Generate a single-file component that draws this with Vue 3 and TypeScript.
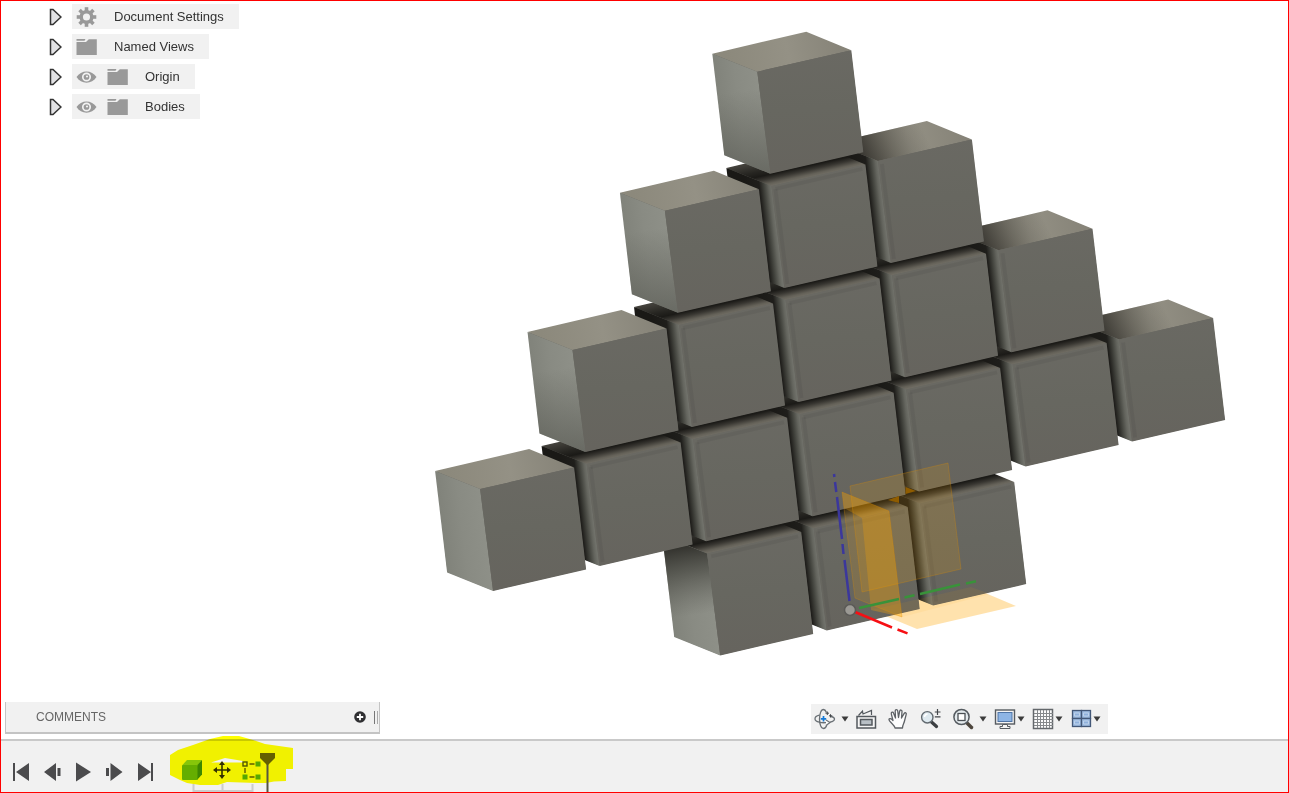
<script setup lang="ts">
interface TreeItem {
  label: string
  icons: string[]
}

interface Cube {
  key: string
  x: number
  y: number
  topOpen: boolean
  leftOpen: boolean
}

interface NavTool {
  id: string
  label: string
  size: string
}

const treeItems: TreeItem[] = [
  { label: 'Document Settings', icons: ['gear'] },
  { label: 'Named Views', icons: ['folder'] },
  { label: 'Origin', icons: ['eye', 'folder'] },
  { label: 'Bodies', icons: ['eye', 'folder'] },
]

const gearTeeth = [0, 45, 90, 135, 180, 225, 270, 315]

// First and last column of each row, from the top row down
const rows: [number, number][] = [[0, 0], [-1, 1], [-2, 2], [-3, 3], [-1, 1]]

const filled = (c: number, r: number): boolean =>
  r >= 0 && r < rows.length && c >= rows[r][0] && c <= rows[r][1]

// Painter's order: bottom row first, right to left
const cubes: Cube[] = []
for (let r = rows.length - 1; r >= 0; r--) {
  for (let c = rows[r][1]; c >= rows[r][0]; c--) {
    cubes.push({
      key: `${c}:${r}`,
      x: 757.3 + 106.5 * c + 14.1 * r,
      y: 71.7 - 24.9 * c + 114.2 * r,
      topOpen: !filled(c, r - 1),
      leftOpen: !filled(c - 1, r),
    })
  }
}

const hull = '-44,-17.5 49,-39 93.500,-21 105.500,80 13,101.500 -32.500,83'
const topFace = '0,0 -45,-18 49,-40 94,-21.5'
const leftFace = '0,0 -45,-18 -33,83.5 13,102'
const frontFace = '0,0 94,-21.5 106,80.5 13,102'

const playback = [
  { label: 'Go to start', path: 'M7 2h2v18H7zM23 2v18L10 11z' },
  { label: 'Step back', path: 'M19 2v18L7 11zM20.5 7h3v8h-3z' },
  { label: 'Play', path: 'M8 1.5v19L23 11z' },
  { label: 'Step forward', path: 'M7 7h3v8H7zM11.5 2v18L23.5 11z' },
  { label: 'Go to end', path: 'M8 2v18L21 11zM21 2h2v18h-2z' },
]

const navTools: NavTool[] = [
  { id: 'orbit', label: 'Orbit', size: 'wide' },
  { id: 'look', label: 'Look at', size: 'plain' },
  { id: 'pan', label: 'Pan', size: 'plain' },
  { id: 'zoom', label: 'Zoom', size: 'plain' },
  { id: 'window', label: 'Zoom window', size: 'wide' },
  { id: 'display', label: 'Display settings', size: 'narrow' },
  { id: 'grid', label: 'Grid and snaps', size: 'narrow' },
  { id: 'views', label: 'Viewports', size: 'narrow' },
]
</script>

<template>
  <main class="app">
    <svg class="scene" viewBox="0 0 1289 793" role="img" aria-label="Pyramid pattern of cubes">
      <defs>
        <linearGradient id="front" gradientUnits="userSpaceOnUse" x1="0" y1="-20" x2="8" y2="100">
          <stop offset="0" stop-color="#6a6963" />
          <stop offset="0.5" stop-color="#676760" />
          <stop offset="1" stop-color="#66645e" />
        </linearGradient>
        <linearGradient id="topOpen" gradientUnits="userSpaceOnUse" x1="-30" y1="-10" x2="90" y2="-32">
          <stop offset="0" stop-color="#8c897c" />
          <stop offset="0.5" stop-color="#949185" />
          <stop offset="1" stop-color="#858277" />
        </linearGradient>
        <linearGradient id="topShade" gradientUnits="userSpaceOnUse" x1="-12" y1="2" x2="48" y2="-26">
          <stop offset="0" stop-color="#262420" stop-opacity="0.8" />
          <stop offset="0.45" stop-color="#33312c" stop-opacity="0.4" />
          <stop offset="1" stop-color="#45433d" stop-opacity="0" />
        </linearGradient>
        <linearGradient id="leftOpen" gradientUnits="userSpaceOnUse" x1="-42" y1="40" x2="6" y2="34">
          <stop offset="0" stop-color="#7f8179" />
          <stop offset="0.5" stop-color="#898b83" />
          <stop offset="1" stop-color="#8e9088" />
        </linearGradient>
        <linearGradient id="leftFoot" gradientUnits="userSpaceOnUse" x1="-20" y1="20" x2="-8" y2="110">
          <stop offset="0" stop-color="#4d4e48" stop-opacity="0" />
          <stop offset="1" stop-color="#4d4e48" stop-opacity="0.6" />
        </linearGradient>
        <linearGradient id="leftHead" gradientUnits="userSpaceOnUse" x1="-24" y1="-10" x2="-14" y2="62">
          <stop offset="0" stop-color="#24231f" stop-opacity="0.9" />
          <stop offset="0.4" stop-color="#3c3c36" stop-opacity="0.6" />
          <stop offset="1" stop-color="#55554f" stop-opacity="0" />
        </linearGradient>
        <linearGradient id="topDark" gradientUnits="userSpaceOnUse" x1="0" y1="0" x2="-6" y2="-27">
          <stop offset="0" stop-color="#716e65" />
          <stop offset="0.1" stop-color="#646158" />
          <stop offset="0.27" stop-color="#383631" />
          <stop offset="0.42" stop-color="#1b1a17" />
          <stop offset="0.6" stop-color="#262521" />
          <stop offset="1" stop-color="#46443e" />
        </linearGradient>
        <linearGradient id="leftDark" gradientUnits="userSpaceOnUse" x1="0" y1="0" x2="-26" y2="3">
          <stop offset="0" stop-color="#70716a" />
          <stop offset="0.1" stop-color="#64655e" />
          <stop offset="0.27" stop-color="#43443e" />
          <stop offset="0.46" stop-color="#1f1e1b" />
          <stop offset="1" stop-color="#1a1916" />
        </linearGradient>
      </defs>

      <polygon points="871,610 971,587 1016,606 917,629" fill="#ffa500" fill-opacity="0.32" />

      <g v-for="cube in cubes" :key="cube.key" :transform="`translate(${cube.x} ${cube.y})`">
        <polygon :points="hull" fill="#65645e" />
        <polygon :points="topFace" :fill="cube.topOpen ? 'url(#topOpen)' : 'url(#topDark)'" />
        <polygon v-if="cube.topOpen && !cube.leftOpen" :points="topFace" fill="url(#topShade)" />
        <polygon :points="leftFace" :fill="cube.leftOpen ? 'url(#leftOpen)' : 'url(#leftDark)'" />
        <polygon v-if="cube.leftOpen && cube.topOpen && cube.y < 480" :points="leftFace" fill="url(#leftFoot)" />
        <polygon v-if="cube.leftOpen && !cube.topOpen" :points="leftFace" fill="url(#leftHead)" />
        <polygon :points="frontFace" fill="url(#front)" />
        <polyline v-if="!cube.topOpen" points="4,3 91,-17" class="crease" />
        <polyline v-if="!cube.leftOpen" points="4,3 16,98" class="crease" />
      </g>

      <polygon points="905.5,487 916,491 905.5,494" fill="#7c4f00" />
      <polygon points="888,500 899,496 899,503" fill="#7c4f00" />
      <polygon points="850,486 948,463 961,569 862,592" class="plane" />
      <polygon points="842,492 889,511 902,617 855,598" class="plane" />
      <polygon points="862,518 889,511 902,617 871,610" class="plane strong" />
      <polygon points="842,492 889,511 862,518 844,508" class="plane strong" />
      <polygon points="871,610 971,587 990,594 902,617" fill="#ffa500" fill-opacity="0.08" />

      <path d="M834 474l.4 3M835 482l1.300 10M837 497l5 42M842.500 544l1 10M844.500 560l5 41" class="axis blue" />
      <path d="M859 608l40-9M904.500 597.500l10-2.300M920 594l40-9.500M966 583.500l10-2.300" class="axis green" />
      <path d="M855 612l37 15.500M897.500 629.500l10 3.800" class="axis red" />
      <circle cx="850" cy="610" r="5.500" fill="#9b9994" stroke="#5b5a57" stroke-width="1.500" />
    </svg>

    <nav class="browser" aria-label="Browser">
      <div v-for="item in treeItems" :key="item.label" class="tree-row">
        <button class="expander" type="button" :aria-label="`Expand ${item.label}`">
          <svg width="13" height="18" viewBox="0 0 13 18">
            <path d="M1.500 1.500v15H4L12 9 4 1.500z" fill="#e2e2e4" stroke="#333" stroke-width="1.500" />
          </svg>
        </button>
        <button class="chip" type="button">
          <svg v-for="icon in item.icons" :key="icon" class="chip-icon" viewBox="0 0 21 20">
            <g v-if="icon === 'gear'" fill="none" stroke="#999">
              <circle cx="10.500" cy="10" r="5.300" stroke-width="3.500" />
              <path
                v-for="angle in gearTeeth"
                :key="angle"
                d="M10.500 0.200V4"
                stroke-width="3.600"
                :transform="`rotate(${angle} 10.500 10)`"
              />
            </g>
            <path
              v-else-if="icon === 'folder'"
              d="M.5 2h9l-1 1.700h-8zM.5 5h9.500l2.800-2.700h8V18H.5z"
              fill="#999"
            />
            <g v-else>
              <path d="M.5 10C5 2.500 16 2.500 20.500 10 16 17.500 5 17.500.5 10z" fill="#999" />
              <circle cx="10.500" cy="10" r="3.700" fill="#999" stroke="#f1f1f1" stroke-width="1.700" />
              <circle cx="11" cy="9.500" r="1.100" fill="#f1f1f1" />
            </g>
          </svg>
          <span class="chip-label">{{ item.label }}</span>
        </button>
      </div>
    </nav>

    <div class="dock">
      <section class="comments">
        <span class="comments-title">COMMENTS</span>
        <button class="add" type="button" aria-label="Add comment">
          <svg width="12" height="12" viewBox="0 0 12 12">
            <circle cx="6" cy="6" r="5.800" fill="#2f2f31" />
            <path d="M6 2.800v6.400M2.800 6h6.400" stroke="#fff" stroke-width="1.800" />
          </svg>
        </button>
        <span class="grip"></span>
      </section>

      <div class="navbar" role="toolbar" aria-label="Navigation">
        <button
          v-for="tool in navTools"
          :key="tool.id"
          type="button"
          :class="['tool', tool.size]"
          :aria-label="tool.label"
        >
          <svg width="22" height="22" viewBox="0 0 22 22">
            <g v-if="tool.id === 'orbit'" fill="none">
              <path d="M12.500 4.500C11.500 2.300 10.500 1.500 9.500 1.500 7 1.500 5.500 6 5.500 11s1.500 9.500 4 9.500c1.500 0 2.600-1.300 3.300-3.500" stroke="#6a7075" stroke-width="1.300" />
              <path d="M14 14.300C8 15.500 1 14 1 11s3-3.500 4.500-3.800M17 8.500c2 .5 3.500 1.300 3.500 2.500 0 1.500-2 2.600-4.500 3.200" stroke="#6a7075" stroke-width="1.300" />
              <path d="M12 17.500l4-3-4-2.500" stroke="#6a7075" stroke-width="1.200" fill="#fff" />
              <path d="M9.500 8v5.500M6.800 10.800h5.400" stroke="#1479d7" stroke-width="1.700" />
              <path d="M13.300 3.500v3.500M11.500 5.200H15M16.500 6.200v3.300M15 7.800h3.300" stroke="#44484c" />
            </g>
            <g v-else-if="tool.id === 'look'" fill="none" stroke="#53585d">
              <rect x="1" y="8.500" width="18.500" height="11.500" stroke-width="1.500" fill="#f5f5f5" />
              <rect x="4.500" y="11.500" width="11.500" height="5.500" stroke-width="1.500" fill="#b9c0c6" />
              <path d="M2.500 7.500L6.500 3l.5 3 8.500-3.500V7" stroke-width="1.200" />
            </g>
            <path
              v-else-if="tool.id === 'pan'"
              d="M7 20c-.5-3-6-6.500-6-8.300 0-1.500 2-1.400 4 .8L3.300 5.800c-.3-1.700 1.700-2.300 2.300-.6L7.500 10 7.200 3c0-1.800 2.200-1.900 2.500-.1l.8 6.600 1.200-6.400c.4-1.700 2.500-1.300 2.300.4L13.500 10l2.700-4.600c.9-1.300 2.500-.5 2 1L16.500 13c-.5 2.500-1.800 3.500-2 7z"
              fill="#fdfdfd"
              stroke="#5e6266"
              stroke-width="1.300"
              stroke-linejoin="round"
            />
            <g v-else-if="tool.id === 'zoom'" fill="none">
              <path d="M11.500 14l5 4.500" stroke="#3c3f42" stroke-width="3.300" stroke-linecap="round" />
              <circle cx="7.300" cy="9.300" r="5.700" fill="#dfeaf0" stroke="#626a70" stroke-width="1.400" />
              <path d="M4.500 9c.3-2 1.500-2.800 3-2.900" stroke="#fff" stroke-width="1.500" />
              <path d="M17.500 1v6M14.800 4h5.700M14.800 8.800h5.700" stroke="#42464a" stroke-width="1.200" />
            </g>
            <g v-else-if="tool.id === 'window'" fill="none">
              <path d="M14.500 14.500l5 5" stroke="#4d463d" stroke-width="3.500" stroke-linecap="round" />
              <circle cx="9.500" cy="9" r="7.600" fill="#e5ebee" stroke="#555b60" stroke-width="1.500" />
              <rect x="6" y="5.500" width="7" height="7" fill="#fff" stroke="#4b5055" stroke-width="1.300" />
            </g>
            <g v-else-if="tool.id === 'display'">
              <rect x="1.500" y="2" width="19" height="14" fill="#f4f4f4" stroke="#565b60" stroke-width="1.400" />
              <rect x="4" y="4.500" width="14" height="9" fill="#8eb5e5" stroke="#4f74a5" />
              <path d="M8.500 16.500h5v2h2.500v2H6v-2h2.500z" fill="#f4f4f4" stroke="#565b60" />
            </g>
            <g v-else-if="tool.id === 'grid'" fill="none" stroke="#85888b">
              <rect x="1.500" y="1.500" width="19" height="19" fill="#fbfbfb" stroke="#63676b" stroke-width="1.500" />
              <path d="M5.500 2v18M8.500 2v18M11.500 2v18M14.500 2v18M17.500 2v18M2 5.500h19M2 8.500h19M2 11.500h19M2 14.500h19M2 17.500h19" />
            </g>
            <g v-else fill="#9ab9df" stroke="#435878" stroke-width="1.300">
              <rect x="2.500" y="2.500" width="9" height="8" />
              <rect x="11.500" y="2.500" width="9" height="8" />
              <rect x="2.500" y="10.500" width="9" height="8" />
              <rect x="11.500" y="10.500" width="9" height="8" />
              <path d="M4.500 8v-3h5v3zM13.500 8v-3h5v3zM4.500 16v-3h5v3zM13.500 16v-3h5v3z" fill="#8fb1dc" stroke="#bdd2ec" stroke-width="1" />
            </g>
          </svg>
          <svg v-if="tool.size !== 'plain'" class="caret" width="8" height="6" viewBox="0 0 8 6">
            <path d="M.5.5h7L4 5.500z" fill="#3b3b3b" />
          </svg>
        </button>
      </div>
    </div>

    <footer class="timeline">
      <div class="playback">
        <button v-for="item in playback" :key="item.label" type="button" :aria-label="item.label">
          <svg width="31" height="22" viewBox="0 0 31 22"><path :d="item.path" fill="#4b4b4d" /></svg>
        </button>
      </div>
      <div class="features">
        <svg class="mark highlight" width="135" height="59" viewBox="0 0 135 59">
          <path
            d="M5 21l8-5 15-5 17-6 13-3h16l14 4 12 4 28 4v21h-7v12l-12 .5-8 1.500H91l-29-1-9 3H35l-13-2-7-3-10-5zM46 28.500h33l-1-1.500-18-3z"
            fill="#ff0"
            fill-rule="evenodd"
          />
        </svg>
        <button type="button" aria-label="Box">
          <svg width="22" height="22" viewBox="0 0 22 22">
            <path d="M1 6.500L6 1h15l-4.500 5.500z" fill="#86c60a" />
            <path d="M16 6.500L21 1v14.500l-5 5.500z" fill="#3d8700" />
            <rect x="1" y="6" width="15.500" height="15" rx="1" fill="#65ae00" />
          </svg>
        </button>
        <button type="button" aria-label="Move">
          <svg width="22" height="22" viewBox="0 0 22 22">
            <path
              d="M11 2l3 4h-2.200v4.200H16V8l4 3-4 3v-2.200h-4.200V16H14l-3 4-3-4h2.200v-4.200H6V14l-4-3 4-3v2.200h4.200V6H8z"
              fill="#302f00"
            />
          </svg>
        </button>
        <button type="button" aria-label="Pattern">
          <svg width="22" height="22" viewBox="0 0 22 22">
            <path d="M8.500 5h5M8.500 18h5M4 9v5" stroke="#5c5b00" stroke-width="1.400" />
            <rect x="2" y="3" width="4" height="4" fill="none" stroke="#4f5500" stroke-width="1.400" />
            <path d="M14.500 2.500h5v5h-5zM1.500 15.500h5v5h-5zM14.500 15.500h5v5h-5z" fill="#55a800" />
          </svg>
        </button>
        <svg class="mark" width="135" height="59" viewBox="0 0 135 59">
          <path d="M28.500 50v7h59v-7M57.500 50v7" fill="none" stroke="#ccc" stroke-width="2" />
          <path d="M102.500 29v30" stroke="#555540" stroke-width="2" />
          <path d="M95 19h15v5l-7.500 7.500L95 24z" fill="#656000" />
        </svg>
      </div>
    </footer>
  </main>
</template>

<style>
body {
  margin: 0;
}
</style>

<style scoped>
.app {
  position: relative;
  box-sizing: border-box;
  display: flex;
  flex-direction: column;
  height: 100vh;
  overflow: hidden;
  background: #fff;
  color: #333;
  font-family: "Liberation Sans", Arial, sans-serif;
}

.app::after {
  content: "";
  position: absolute;
  inset: 0;
  border: 1px solid #f00;
  pointer-events: none;
}

button {
  display: flex;
  align-items: center;
  padding: 0;
  border: 0;
  background: none;
  color: inherit;
  font: inherit;
}

svg {
  display: block;
  flex: none;
}

.scene {
  position: absolute;
  inset: 0;
  width: 100%;
  height: 100%;
}

.crease {
  fill: none;
  stroke: #000;
  stroke-opacity: 0.05;
  stroke-width: 4;
}

.plane {
  fill: #ffa500;
  fill-opacity: 0.15;
  stroke: #d98c00;
  stroke-opacity: 0.3;
  stroke-width: 1;
}

.strong {
  fill-opacity: 0.26;
  stroke: none;
}

.axis {
  fill: none;
  stroke-width: 2.5;
}

.blue {
  stroke: #3b379c;
}

.green {
  stroke: #39923a;
}

.red {
  stroke: #f60f14;
}

.browser {
  position: relative;
  display: flex;
  flex: 1;
  flex-direction: column;
  gap: 5px;
  padding: 4px 0 0 49px;
}

.tree-row {
  display: flex;
  align-items: center;
  gap: 10px;
  height: 25px;
}

.chip {
  gap: 10px;
  height: 25px;
  padding: 0 15px 0 4px;
  background: #f1f1f1;
  font-size: 13px;
}

.chip-icon {
  width: 21px;
  height: 20px;
}

.chip-label {
  padding-left: 7px;
  white-space: nowrap;
}

.dock {
  position: relative;
  display: flex;
  align-items: flex-end;
  justify-content: space-between;
  padding: 0 181px 5px 5px;
}

.comments {
  box-sizing: border-box;
  display: flex;
  align-items: center;
  width: 375px;
  height: 32px;
  padding: 0 1px 0 30px;
  border: 1px solid #c4c4c4;
  border-top: 0;
  border-bottom-width: 2px;
  background: #f1f1f1;
}

.comments-title {
  flex: 1;
  color: #666;
  font-size: 12px;
}

.grip {
  width: 2px;
  height: 13px;
  margin-left: 8px;
  border-right: 1px solid #aaa;
  border-left: 1px solid #777;
}

.navbar {
  display: flex;
  height: 30px;
  padding-left: 3px;
  background: #f1f1f1;
}

.plain {
  width: 32px;
}

.wide {
  gap: 5px;
  width: 42px;
}

.narrow {
  gap: 1px;
  width: 38px;
}

.timeline {
  display: flex;
  height: 52px;
  padding-left: 6px;
  border-top: 2px solid #c9c9c9;
  background: #f1f1f1;
}

.playback {
  display: flex;
  padding-top: 9px;
}

.features {
  position: relative;
  display: flex;
  margin-left: 16px;
  padding-top: 6px;
}

.features button {
  position: relative;
  justify-content: center;
  width: 30px;
}

.mark {
  position: absolute;
  top: -7px;
  left: -12px;
  pointer-events: none;
}

.highlight {
  mix-blend-mode: multiply;
}
</style>
